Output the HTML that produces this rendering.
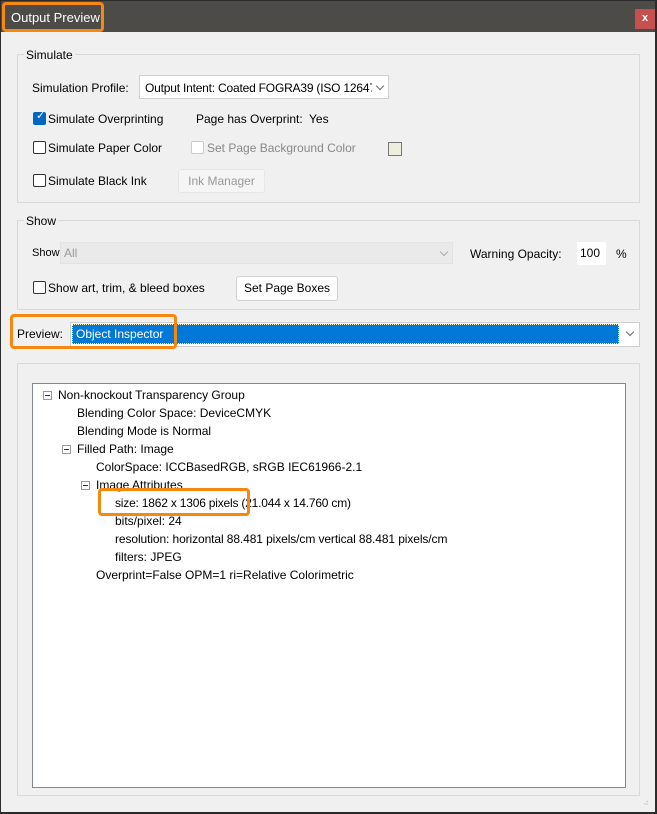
<!DOCTYPE html>
<html><head><meta charset="utf-8"><style>
*{box-sizing:border-box;margin:0;padding:0}
body{width:657px;height:814px;background:#2b2b2b;font-family:"Liberation Sans",sans-serif;font-size:12px;color:#000;position:relative;overflow:hidden}
.a{position:absolute;white-space:nowrap}
#win{position:absolute;left:1px;top:1px;width:654px;height:811px;background:#f0f0f0}
#title{position:absolute;left:0;top:0;width:654px;height:31px;background:#4d4b48}
.grp{position:absolute;border:1px solid #d9d9d9}
.lbl{position:absolute;background:#f0f0f0;padding:0 2px}
.cb{position:absolute;width:13px;height:13px;border:1px solid #333;border-radius:2px;background:#fff}
.btn{position:absolute;border:1px solid #d0d0d0;border-radius:3px;background:#fdfdfd;text-align:center}
.orange{position:absolute;border:3px solid #f7880f;border-radius:4px}
.sel{position:absolute;background:#fff;border:1px solid #cfcfcf}
.chev{position:absolute;width:6px;height:6px;border-right:1px solid #666;border-bottom:1px solid #666;transform:rotate(45deg)}
.minus{position:absolute;width:9px;height:9px;border:1px solid #999;background:#fff}
.minus:after{content:"";position:absolute;left:1px;top:3px;width:5px;height:1px;background:#333}
</style></head><body>
<div id="win">
<div id="title"></div>
<div class="a" style="left:10px;top:9px;color:#fff;font-size:13px">Output Preview</div>
<div class="orange" style="left:1px;top:1px;width:102px;height:30px"></div>
<div class="a" style="left:634px;top:8px;width:20px;height:20px;background:#c64f50;color:#fff;font-weight:bold;text-align:center;line-height:19px;font-size:11px">x</div>

<div class="grp" style="left:16px;top:53px;width:623px;height:149px"></div>
<div class="lbl a" style="left:23px;top:47px">Simulate</div>
<div class="a" style="left:31px;top:80px">Simulation Profile:</div>
<div class="sel" style="left:138px;top:74px;width:250px;height:24px;overflow:hidden"><div class="a" style="left:5px;top:5px;letter-spacing:-0.2px">Output Intent: Coated FOGRA39 (ISO 12647</div><div class="a" style="left:232px;top:0;width:17px;height:22px;background:#fff"></div></div>
<div class="chev" style="left:376px;top:82px"></div>
<div class="cb" style="left:32px;top:111px;background:#0067c0;border-color:#0067c0"></div>
<div class="a" style="left:35px;top:108px;color:#fff;font-size:11px">✓</div>
<div class="a" style="left:47px;top:111px">Simulate Overprinting</div>
<div class="a" style="left:195px;top:111px">Page has Overprint:</div>
<div class="a" style="left:308px;top:111px">Yes</div>
<div class="cb" style="left:32px;top:140px"></div>
<div class="a" style="left:47px;top:140px">Simulate Paper Color</div>
<div class="cb" style="left:190px;top:140px;border-color:#ccc"></div>
<div class="a" style="left:206px;top:140px;color:#888">Set Page Background Color</div>
<div class="a" style="left:387px;top:141px;width:14px;height:14px;border:1px solid #777;background:#eeeedc"></div>
<div class="cb" style="left:32px;top:173px"></div>
<div class="a" style="left:47px;top:173px">Simulate Black Ink</div>
<div class="btn" style="left:177px;top:168px;width:87px;height:24px;color:#999;line-height:22px;border-color:#e6e6e6;background:#f5f5f5">Ink Manager</div>

<div class="grp" style="left:16px;top:219px;width:623px;height:90px"></div>
<div class="lbl a" style="left:23px;top:213px">Show</div>
<div class="a" style="left:31px;top:246px;font-size:11px">Show:</div>
<div class="a" style="left:59px;top:241px;width:393px;height:22px;background:#eaeaea;border:1px solid #e2e2e2"></div>
<div class="a" style="left:63px;top:245px;color:#999">All</div>
<div class="chev" style="left:440px;top:248px;border-color:#aaa"></div>
<div class="a" style="left:469px;top:246px">Warning Opacity:</div>
<div class="a" style="left:576px;top:241px;width:29px;height:23px;background:#fff"></div>
<div class="a" style="left:579px;top:245px">100</div>
<div class="a" style="left:615px;top:246px">%</div>
<div class="cb" style="left:32px;top:280px"></div>
<div class="a" style="left:47px;top:280px">Show art, trim, &amp; bleed boxes</div>
<div class="btn" style="left:235px;top:275px;width:102px;height:25px;line-height:23px">Set Page Boxes</div>

<div class="a" style="left:16px;top:326px">Preview:</div>
<div class="sel" style="left:69px;top:321px;width:570px;height:25px"></div>
<div class="a" style="left:71px;top:323px;width:547px;height:20px;background:#0078d7;border:1px dotted #ffd"></div>
<div class="a" style="left:75px;top:326px;color:#fff">Object Inspector</div>
<div class="chev" style="left:626px;top:328px"></div>
<div class="orange" style="left:9px;top:313px;width:167px;height:35px"></div>

<div class="grp" style="left:16px;top:362px;width:623px;height:433px"></div>
<div class="a" style="left:31px;top:382px;width:594px;height:405px;background:#fff;border:1px solid #828790"></div>
<div class="minus" style="left:42px;top:390px"></div>
<div class="a" style="left:57px;top:387px">Non-knockout Transparency Group</div>
<div class="a" style="left:76px;top:405px">Blending Color Space: DeviceCMYK</div>
<div class="a" style="left:76px;top:423px">Blending Mode is Normal</div>
<div class="minus" style="left:61px;top:444px"></div>
<div class="a" style="left:76px;top:441px">Filled Path: Image</div>
<div class="a" style="left:95px;top:459px">ColorSpace: ICCBasedRGB, sRGB IEC61966-2.1</div>
<div class="minus" style="left:80px;top:480px"></div>
<div class="a" style="left:95px;top:477px">Image Attributes</div>
<div class="a" style="left:114px;top:495px;letter-spacing:-0.2px">size: 1862 x 1306 pixels (21.044 x 14.760 cm)</div>
<div class="a" style="left:114px;top:513px">bits/pixel: 24</div>
<div class="a" style="left:114px;top:531px;letter-spacing:-0.1px">resolution: horizontal 88.481 pixels/cm vertical 88.481 pixels/cm</div>
<div class="a" style="left:114px;top:549px">filters: JPEG</div>
<div class="a" style="left:95px;top:567px">Overprint=False OPM=1 ri=Relative Colorimetric</div>
<div class="orange" style="left:97px;top:487px;width:152px;height:28px"></div>
<div class="a" style="left:642px;top:797px;color:#bbb;font-size:8px">⠴</div>
</div>
</body></html>
